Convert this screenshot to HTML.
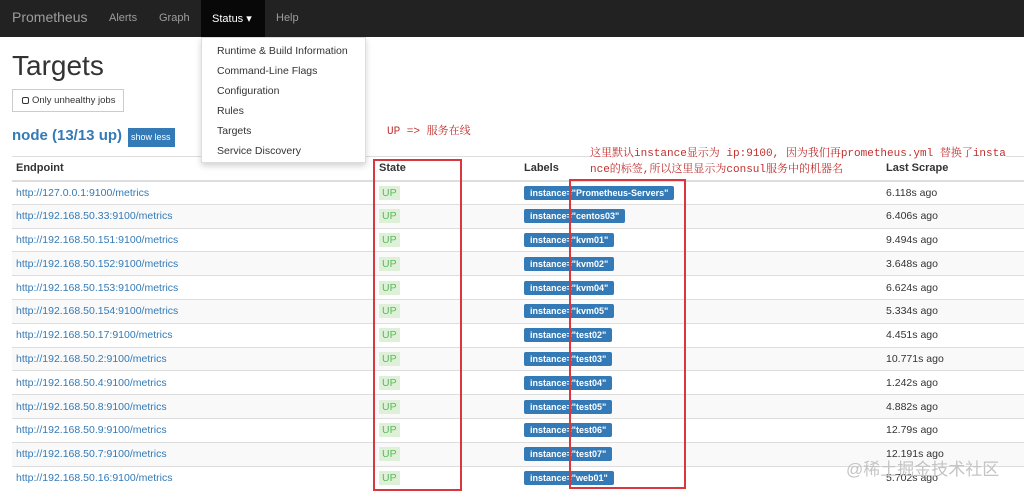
<!DOCTYPE html>
<html><head><meta charset="utf-8"><style>
*{box-sizing:border-box;margin:0;padding:0}
body{width:1024px;height:491px;overflow:hidden;background:#fff;font-family:"Liberation Sans",Arial,sans-serif;position:relative;color:#333}
.nav{position:absolute;left:0;top:0;width:1024px;height:37px;background:#222}
.nav span{position:absolute;top:11px;font-size:11px;color:#9d9d9d}
.nav .brand{font-size:14px;top:9px;left:12px}
.nav .act{position:absolute;left:201px;top:0;width:64px;height:37px;background:#080808}
.dd{position:absolute;z-index:5;left:201px;top:37px;width:165px;height:126px;background:#fff;border:1px solid #ddd;box-shadow:0 3px 6px rgba(0,0,0,.18)}
.dd div{position:absolute;left:15px;font-size:10.5px;color:#333}
h1{position:absolute;left:12px;top:50px;font-size:28px;font-weight:normal;color:#333}
.btn{position:absolute;left:12px;top:89px;width:112px;height:23px;border:1px solid #ccc;font-size:9.5px;padding:5px 0 0 9px}
.btn i{display:inline-block;width:7px;height:7px;border:1.5px solid #333;border-radius:2px;margin-right:3px;vertical-align:-1px}
.job{position:absolute;left:12px;top:127px;font-size:15px;font-weight:bold;color:#337ab7}
.sl{position:absolute;left:128px;top:128px;width:47px;height:19px;background:#337ab7;color:#fff;font-size:9px;padding:4px 0 0 3px}
table{position:absolute;left:12px;top:156px;width:1012px;border-collapse:collapse;font-size:10.5px}
td,th{height:23.8px;padding:0 4px;border-top:1px solid #ddd;text-align:left;white-space:nowrap}
td:nth-child(n+2),th:nth-child(n+2){padding-left:6px}
th{height:24px;font-size:11px;border-bottom:2px solid #ddd}
tr:nth-child(odd) td{background:#f9f9f9}
td:nth-child(1){color:#337ab7}
.up{background:#dff0d8;color:#5cb85c;padding:1px 3px;font-size:10.5px}
.lb{background:#337ab7;color:#fff;font-weight:bold;font-size:9px;padding:2px 6px;border-radius:2px}
.red{position:absolute;border:2px solid #d9363e}
.ann{position:absolute;color:#c0302f;font-family:"Liberation Mono","Noto Serif CJK SC",monospace;font-size:11px}
.wm{position:absolute;left:846px;top:455px;font-size:17px;color:#c4c4c4;font-family:"Liberation Sans","Noto Sans CJK SC",sans-serif}
</style></head><body>
<div class="nav"><div class="act"></div>
<span class="brand">Prometheus</span><span style="left:109px;top:12px">Alerts</span><span style="left:159px;top:12px">Graph</span><span style="left:212px;top:12px;color:#fff">Status ▾</span><span style="left:276px;top:12px">Help</span></div>
<div class="dd"><div style="top:7px">Runtime &amp; Build Information</div><div style="top:27px">Command-Line Flags</div><div style="top:47px">Configuration</div><div style="top:67px">Rules</div><div style="top:87px">Targets</div><div style="top:107px">Service Discovery</div></div>
<h1>Targets</h1>
<div class="btn"><i></i>Only unhealthy jobs</div>
<div class="job">node (13/13 up)</div><div class="sl">show less</div>
<table>
<colgroup><col style="width:361px"><col style="width:145px"><col style="width:362px"><col></colgroup>
<tr><th>Endpoint</th><th>State</th><th>Labels</th><th>Last Scrape</th></tr>
<tr><td>http://127.0.0.1:9100/metrics</td><td><span class="up">UP</span></td><td><span class="lb">instance="Prometheus-Servers"</span></td><td>6.118s ago</td></tr>
<tr><td>http://192.168.50.33:9100/metrics</td><td><span class="up">UP</span></td><td><span class="lb">instance="centos03"</span></td><td>6.406s ago</td></tr>
<tr><td>http://192.168.50.151:9100/metrics</td><td><span class="up">UP</span></td><td><span class="lb">instance="kvm01"</span></td><td>9.494s ago</td></tr>
<tr><td>http://192.168.50.152:9100/metrics</td><td><span class="up">UP</span></td><td><span class="lb">instance="kvm02"</span></td><td>3.648s ago</td></tr>
<tr><td>http://192.168.50.153:9100/metrics</td><td><span class="up">UP</span></td><td><span class="lb">instance="kvm04"</span></td><td>6.624s ago</td></tr>
<tr><td>http://192.168.50.154:9100/metrics</td><td><span class="up">UP</span></td><td><span class="lb">instance="kvm05"</span></td><td>5.334s ago</td></tr>
<tr><td>http://192.168.50.17:9100/metrics</td><td><span class="up">UP</span></td><td><span class="lb">instance="test02"</span></td><td>4.451s ago</td></tr>
<tr><td>http://192.168.50.2:9100/metrics</td><td><span class="up">UP</span></td><td><span class="lb">instance="test03"</span></td><td>10.771s ago</td></tr>
<tr><td>http://192.168.50.4:9100/metrics</td><td><span class="up">UP</span></td><td><span class="lb">instance="test04"</span></td><td>1.242s ago</td></tr>
<tr><td>http://192.168.50.8:9100/metrics</td><td><span class="up">UP</span></td><td><span class="lb">instance="test05"</span></td><td>4.882s ago</td></tr>
<tr><td>http://192.168.50.9:9100/metrics</td><td><span class="up">UP</span></td><td><span class="lb">instance="test06"</span></td><td>12.79s ago</td></tr>
<tr><td>http://192.168.50.7:9100/metrics</td><td><span class="up">UP</span></td><td><span class="lb">instance="test07"</span></td><td>12.191s ago</td></tr>
<tr><td>http://192.168.50.16:9100/metrics</td><td><span class="up">UP</span></td><td><span class="lb">instance="web01"</span></td><td>5.702s ago</td></tr>
</table>
<div class="red" style="left:373px;top:159px;width:89px;height:332px"></div>
<div class="red" style="left:569px;top:179px;width:117px;height:310px"></div>
<div class="ann" style="left:387px;top:122px">UP =&gt; 服务在线</div>
<div class="ann" style="left:590px;top:144px;background:#fff">这里默认instance显示为 ip:9100, 因为我们再prometheus.yml 替换了insta</div>
<div class="ann" style="left:590px;top:160px">nce的标签,所以这里显示为consul服务中的机器名</div>
<div class="wm">@稀土掘金技术社区</div>
</body></html>
